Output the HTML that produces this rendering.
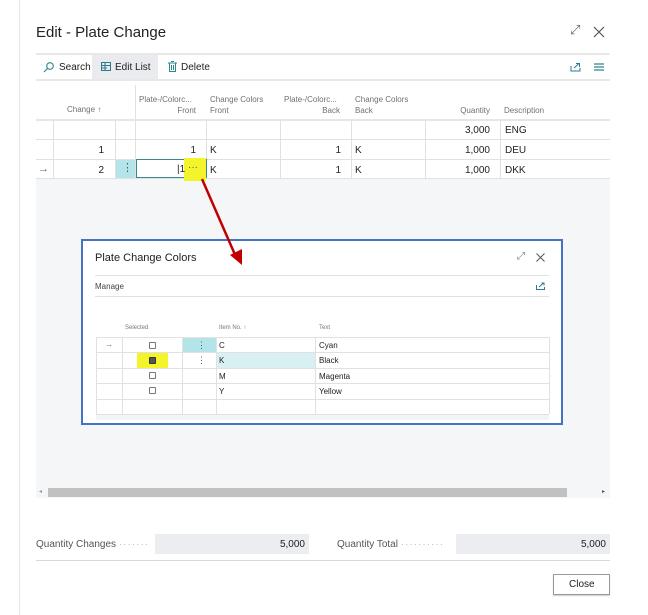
<!DOCTYPE html>
<html><head><style>
*{box-sizing:border-box;margin:0;padding:0}
body{width:648px;height:615px;background:#fff;font-family:"Liberation Sans",sans-serif;color:#212121;position:relative;overflow:hidden;font-size:9px}
.a{position:absolute}
.t{position:absolute;white-space:nowrap}
.hl{position:absolute;height:1px;background:#e1e1e1}
.vl{position:absolute;width:1px;background:#e1e1e1}
.g{color:#707070;font-size:8px}
.r{text-align:right}
.cb{position:absolute;width:7px;height:7px;border:1px solid #777;border-radius:1px;background:#fff}
</style></head><body>
<div class="a" style="left:19px;top:0;width:1px;height:615px;background:#e6e6e6"></div>
<div class="t" style="left:36px;top:24px;font-size:15px;color:#222">Edit - Plate Change</div>
<div class="t" style="left:570px;top:22px;font-size:13px;color:#666">⤢</div>
<svg class="a" style="left:593px;top:26px" width="12" height="12"><path d="M1 1L11 11M11 1L1 11" stroke="#555" stroke-width="1.2"/></svg>
<div class="hl" style="left:36px;top:53px;width:574px;background:#e8e8e8;height:2px"></div>
<div class="hl" style="left:36px;top:79px;width:574px;background:#e8e8e8;height:2px"></div>
<div class="a" style="left:92px;top:55px;width:66px;height:24px;background:#e9ebee"></div>
<svg class="a" style="left:43px;top:62px" width="11" height="11"><circle cx="7" cy="4" r="3.3" fill="none" stroke="#2a8a8a" stroke-width="1.1"/><path d="M4.5 6.5L1 10" stroke="#2a8a8a" stroke-width="1.2"/></svg>
<div class="t" style="left:59px;top:62px;font-size:10px">Search</div>
<svg class="a" style="left:101px;top:62px" width="11" height="10"><rect x="0.5" y="0.5" width="9" height="8" fill="none" stroke="#2a7a8a"/><path d="M0 3.5H10M0 6H6M4 1V9" stroke="#2a7a8a"/></svg>
<div class="t" style="left:115px;top:62px;font-size:10px">Edit List</div>
<svg class="a" style="left:168px;top:61px" width="9" height="11"><path d="M0 2H9M3 0.5H6M1.5 2V10.5H7.5V2M3.5 4V9M5.5 4V9" stroke="#2a8a8a" fill="none"/></svg>
<div class="t" style="left:181px;top:62px;font-size:10px">Delete</div>
<svg class="a" style="left:570px;top:62px" width="11" height="10"><path d="M1 4V9H10V6M4 6L9 1.5M6 1.5H9.5V5" stroke="#2a7a9a" fill="none"/></svg>
<svg class="a" style="left:594px;top:63px" width="10" height="8"><path d="M0 1H10M0 4H10M0 7H10" stroke="#2a8a8a" stroke-width="1.3"/></svg>
<div class="vl" style="left:135px;top:85px;height:34px"></div>
<div class="t g" style="left:67px;top:105px">Change ↑</div>
<div class="t g" style="left:139px;top:95px">Plate-/Colorc...</div>
<div class="t g r" style="left:140px;top:106px;width:56px">Front</div>
<div class="t g" style="left:210px;top:95px">Change Colors</div>
<div class="t g" style="left:210px;top:106px">Front</div>
<div class="t g" style="left:284px;top:95px">Plate-/Colorc...</div>
<div class="t g r" style="left:284px;top:106px;width:56px">Back</div>
<div class="t g" style="left:355px;top:95px">Change Colors</div>
<div class="t g" style="left:355px;top:106px">Back</div>
<div class="t g r" style="left:430px;top:106px;width:60px">Quantity</div>
<div class="t g" style="left:504px;top:106px">Description</div>
<div class="a" style="left:36px;top:178px;width:574px;height:320px;background:#f5f6f8"></div>
<div class="hl" style="left:36px;top:119px;width:574px;height:2px;background:#e6e6e6"></div>
<div class="hl" style="left:36px;top:139px;width:574px"></div>
<div class="hl" style="left:36px;top:159px;width:574px"></div>
<div class="hl" style="left:36px;top:178px;width:574px"></div>
<div class="vl" style="left:53px;top:120px;height:58px"></div>
<div class="vl" style="left:115px;top:120px;height:58px"></div>
<div class="vl" style="left:135px;top:120px;height:58px"></div>
<div class="vl" style="left:206px;top:120px;height:58px"></div>
<div class="vl" style="left:280px;top:120px;height:58px"></div>
<div class="vl" style="left:351px;top:120px;height:58px"></div>
<div class="vl" style="left:425px;top:120px;height:58px"></div>
<div class="vl" style="left:500px;top:120px;height:58px"></div>
<div class="a" style="left:116px;top:160px;width:19px;height:18px;background:#b3e4e8"></div>
<div class="t" style="left:122px;top:161px;font-size:11px;color:#555">⋮</div>
<div class="a" style="left:136px;top:159px;width:71px;height:19px;border:1px solid #3a8a8a;background:#fff"></div>
<div class="a" style="left:184px;top:158px;width:22px;height:23px;background:#f4f42a"></div>
<div class="t" style="left:188px;top:162px;font-size:10px;color:#555">···</div>
<div class="t" style="left:177px;top:164px;font-size:10px">|1</div>
<div class="t" style="left:38px;top:163px;font-size:11px;color:#666">→</div>
<div class="t r" style="left:60px;top:145px;width:44px;font-size:10px">1</div>
<div class="t r" style="left:60px;top:165px;width:44px;font-size:10px">2</div>
<div class="t r" style="left:150px;top:145px;width:46px;font-size:10px">1</div>
<div class="t" style="left:210px;top:145px;font-size:10px">K</div>
<div class="t" style="left:210px;top:165px;font-size:10px">K</div>
<div class="t r" style="left:300px;top:145px;width:41px;font-size:10px">1</div>
<div class="t r" style="left:300px;top:165px;width:41px;font-size:10px">1</div>
<div class="t" style="left:355px;top:145px;font-size:10px">K</div>
<div class="t" style="left:355px;top:165px;font-size:10px">K</div>
<div class="t r" style="left:430px;top:125px;width:60px;font-size:10px">3,000</div>
<div class="t r" style="left:430px;top:145px;width:60px;font-size:10px">1,000</div>
<div class="t r" style="left:430px;top:165px;width:60px;font-size:10px">1,000</div>
<div class="t" style="left:505px;top:125px;font-size:10px">ENG</div>
<div class="t" style="left:505px;top:145px;font-size:10px">DEU</div>
<div class="t" style="left:505px;top:165px;font-size:10px">DKK</div>
<div class="a" style="left:81px;top:239px;width:482px;height:186px;border:2px solid #4472c4;background:#fff"></div>
<div class="t" style="left:95px;top:252px;font-size:11px">Plate Change Colors</div>
<div class="t" style="left:517px;top:251px;font-size:10px;color:#777">⤢</div>
<svg class="a" style="left:536px;top:253px" width="9" height="9"><path d="M0.5 0.5L8.5 8.5M8.5 0.5L0.5 8.5" stroke="#555"/></svg>
<div class="hl" style="left:95px;top:275px;width:454px"></div>
<div class="t" style="left:95px;top:282px;font-size:8px;color:#444">Manage</div>
<svg class="a" style="left:536px;top:282px" width="9" height="8"><path d="M0.5 3V7.5H8.5V5M3 5L7.5 1M5.5 1H8V3.5" stroke="#2a7a9a" fill="none"/></svg>
<div class="hl" style="left:95px;top:296px;width:454px"></div>
<div class="t" style="left:125px;top:325px;font-size:6px;color:#777">Selected</div>
<div class="t" style="left:219px;top:325px;font-size:6px;color:#777">Item No. ↑</div>
<div class="t" style="left:319px;top:325px;font-size:6px;color:#777">Text</div>
<div class="a" style="left:96px;top:414px;width:453px;height:6px;background:#f3f4f6"></div>
<div class="a" style="left:182px;top:338px;width:34px;height:14px;background:#b3e4e8"></div>
<div class="a" style="left:216px;top:353px;width:99px;height:15px;background:#d9f0f2"></div>
<div class="a" style="left:137px;top:353px;width:31px;height:15px;background:#f4f42a"></div>
<div class="hl" style="left:96px;top:337px;width:453px"></div>
<div class="hl" style="left:96px;top:352px;width:453px"></div>
<div class="hl" style="left:96px;top:368px;width:453px"></div>
<div class="hl" style="left:96px;top:383px;width:453px"></div>
<div class="hl" style="left:96px;top:399px;width:453px"></div>
<div class="hl" style="left:96px;top:414px;width:453px"></div>
<div class="vl" style="left:96px;top:337px;height:77px"></div>
<div class="vl" style="left:122px;top:337px;height:77px"></div>
<div class="vl" style="left:182px;top:337px;height:77px"></div>
<div class="vl" style="left:216px;top:337px;height:77px"></div>
<div class="vl" style="left:315px;top:337px;height:77px"></div>
<div class="vl" style="left:549px;top:337px;height:77px"></div>
<div class="t" style="left:105px;top:340px;font-size:8px;color:#666">→</div>
<div class="cb" style="left:149px;top:342px"></div>
<div class="cb" style="left:149px;top:357px;background:#555;border-color:#333"></div>
<div class="cb" style="left:149px;top:372px"></div>
<div class="cb" style="left:149px;top:387px"></div>
<div class="t" style="left:197px;top:340px;font-size:9px;color:#555">⋮</div>
<div class="t" style="left:197px;top:355px;font-size:9px;color:#555">⋮</div>
<div class="t" style="left:219px;top:341px;font-size:8px">C</div>
<div class="t" style="left:219px;top:356px;font-size:8px">K</div>
<div class="t" style="left:219px;top:372px;font-size:8px">M</div>
<div class="t" style="left:219px;top:387px;font-size:8px">Y</div>
<div class="t" style="left:319px;top:341px;font-size:8px">Cyan</div>
<div class="t" style="left:319px;top:356px;font-size:8px">Black</div>
<div class="t" style="left:319px;top:372px;font-size:8px">Magenta</div>
<div class="t" style="left:319px;top:387px;font-size:8px">Yellow</div>
<svg class="a" style="left:190px;top:175px" width="60" height="95"><path d="M12 4L46 82" stroke="#c00000" stroke-width="2.5"/><path d="M40 80L52 90L52 74Z" fill="#c00000"/></svg>
<div class="a" style="left:36px;top:487px;width:574px;height:11px;background:#f5f6f8"></div>
<div class="a" style="left:48px;top:488px;width:519px;height:9px;background:#c1c1c1"></div>
<div class="t" style="left:39px;top:488px;font-size:6px;color:#999">◂</div>
<div class="t" style="left:602px;top:488px;font-size:6px;color:#555">▸</div>
<div class="t" style="left:36px;top:539px;font-size:10px;color:#555">Quantity Changes <span style="color:#bbb;letter-spacing:1px">·······</span></div>
<div class="a" style="left:155px;top:534px;width:154px;height:20px;background:#ebedf0"></div>
<div class="t r" style="left:155px;top:539px;width:150px;font-size:10px">5,000</div>
<div class="t" style="left:337px;top:539px;font-size:10px;color:#555">Quantity Total <span style="color:#bbb;letter-spacing:1px">··········</span></div>
<div class="a" style="left:456px;top:534px;width:154px;height:20px;background:#ebedf0"></div>
<div class="t r" style="left:456px;top:539px;width:150px;font-size:10px">5,000</div>
<div class="hl" style="left:36px;top:560px;width:574px;background:#d8d8d8"></div>
<div class="a" style="left:553px;top:574px;width:57px;height:21px;border:1px solid #999;background:#fff;box-shadow:0 1px 1px #ccc"></div>
<div class="t" style="left:569px;top:579px;font-size:10px">Close</div>
</body></html>
